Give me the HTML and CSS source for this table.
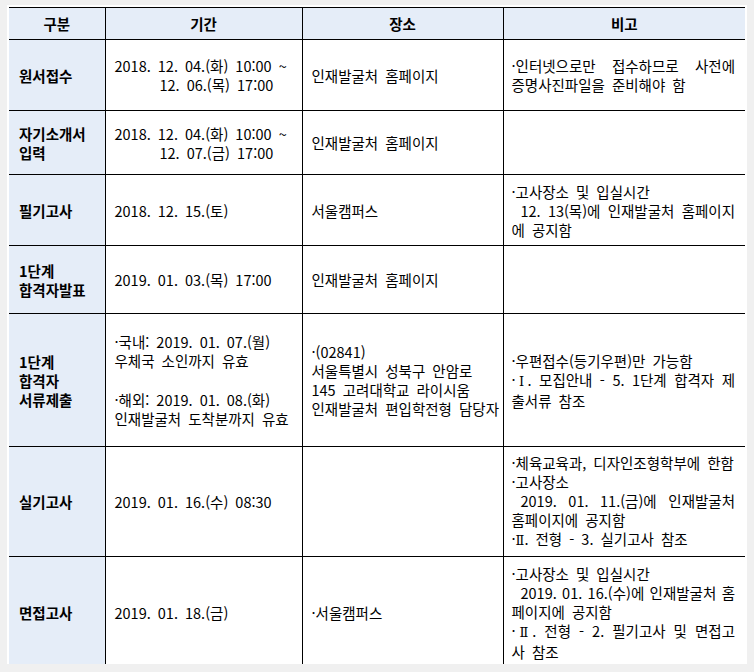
FILE: index.html
```html
<!DOCTYPE html>
<html lang="ko">
<head>
<meta charset="utf-8">
<title>전형일정</title>
<link rel="stylesheet" href="styles.css">
</head>
<body>
<div class="panel">
<table class="sched">
  <colgroup>
    <col class="c1"><col class="c2"><col class="c3"><col class="c4">
  </colgroup>
  <thead>
    <tr class="r-head">
      <th class="h-first">구분</th>
      <th>기간</th>
      <th>장소</th>
      <th class="h-last">비고</th>
    </tr>
  </thead>
  <tbody>
    <tr class="r1">
      <td class="cat">원서접수</td>
      <td><div>2018. 12. 04.(화) 10:00 ~</div><div class="cont">12. 06.(목) 17:00</div></td>
      <td>인재발굴처 홈페이지</td>
      <td class="note"><div class="just">·인터넷으로만 접수하므로 사전에</div><div>증명사진파일을 준비해야 함</div></td>
    </tr>
    <tr class="r2">
      <td class="cat"><div>자기소개서</div><div>입력</div></td>
      <td><div>2018. 12. 04.(화) 10:00 ~</div><div class="cont">12. 07.(금) 17:00</div></td>
      <td>인재발굴처 홈페이지</td>
      <td class="note"></td>
    </tr>
    <tr class="r3">
      <td class="cat">필기고사</td>
      <td>2018. 12. 15.(토)</td>
      <td>서울캠퍼스</td>
      <td class="note"><div>·고사장소 및 입실시간</div><div class="ind just">12. 13(목)에 인재발굴처 홈페이지</div><div>에 공지함</div></td>
    </tr>
    <tr class="r4">
      <td class="cat"><div>1단계</div><div>합격자발표</div></td>
      <td>2019. 01. 03.(목) 17:00</td>
      <td>인재발굴처 홈페이지</td>
      <td class="note"></td>
    </tr>
    <tr class="r5">
      <td class="cat"><div>1단계</div><div>합격자</div><div>서류제출</div></td>
      <td><div>·국내: 2019. 01. 07.(월)</div><div>우체국 소인까지 유효</div><div class="gap">·해외: 2019. 01. 08.(화)</div><div>인재발굴처 도착분까지 유효</div></td>
      <td><div>·(02841)</div><div>서울특별시 성북구 안암로</div><div>145 고려대학교 라이시움</div><div>인재발굴처 편입학전형 담당자</div></td>
      <td class="note"><div>·우편접수(등기우편)만 가능함</div><div class="just">·<span class="rn">Ⅰ</span>. 모집안내 - 5. 1단계 합격자 제</div><div>출서류 참조</div></td>
    </tr>
    <tr class="r6">
      <td class="cat">실기고사</td>
      <td>2019. 01. 16.(수) 08:30</td>
      <td></td>
      <td class="note"><div>·체육교육과, 디자인조형학부에 한함</div><div>·고사장소</div><div class="ind just">2019. 01. 11.(금)에 인재발굴처</div><div>홈페이지에 공지함</div><div>·<span class="rn">Ⅱ</span>. 전형 - 3. 실기고사 참조</div></td>
    </tr>
    <tr class="r7">
      <td class="cat">면접고사</td>
      <td>2019. 01. 18.(금)</td>
      <td>·서울캠퍼스</td>
      <td class="note"><div>·고사장소 및 입실시간</div><div class="ind just">2019. 01. 16.(수)에 인재발굴처 홈</div><div>페이지에 공지함</div><div class="just">·<span class="rn">Ⅱ</span>. 전형 - 2. 필기고사 및 면접고</div><div>사 참조</div></td>
    </tr>
  </tbody>
</table>
</div>
</body>
</html>
```

FILE: styles.css
```css
html, body {
  margin: 0;
  padding: 0;
  background: #f0f0f0;
}

body {
  font-family: "Noto Sans CJK KR", "Noto Sans", sans-serif;
  color: #000;
  font-size: 14.5px;
  line-height: 19px;
  word-spacing: 3px;
}

.panel {
  margin: 5px 7px 0 7px;
  height: 659px;
  background: #ffffff;
  overflow: hidden;
  padding: 2px 2px 0 2px;
  box-sizing: border-box;
}

.sched {
  width: 736px;
  table-layout: fixed;
  border-collapse: collapse;
}

.c1 { width: 96px; }
.c2 { width: 197px; }
.c3 { width: 201px; }
.c4 { width: 242px; }

.sched th,
.sched td {
  border: 1px solid #000;
  vertical-align: middle;
  padding: 0 9px 0 9px;
  text-align: left;
  white-space: nowrap;
}

.sched th {
  background: #e5edf8;
  font-weight: 700;
  text-align: center;
}

.sched th.h-first,
.sched td.cat {
  border-left: none;
}

.sched th.h-last,
.sched td.note {
  border-right: none;
}

.sched td.cat {
  background: #e5edf8;
  font-weight: 700;
  padding-left: 10px;
}

.sched td.note {
  padding-left: 8px;
  padding-right: 10px;
}

.r-head { height: 32px; }
.r1 { height: 71px; }
.r2 { height: 64px; }
.r3 { height: 71px; }
.r4 { height: 68px; }
.r5 { height: 133px; }
.r6 { height: 110px; }
.r7 { height: 111px; }

.cont { padding-left: 45px; }

.ind { padding-left: 9px; }

.just {
  text-align: justify;
  text-align-last: justify;
  word-spacing: 0;
}

.rn {
  font-family: "DejaVu Serif", "DejaVu Sans", serif;
  font-size: 13px;
}

.gap { margin-top: 20px; }
```
